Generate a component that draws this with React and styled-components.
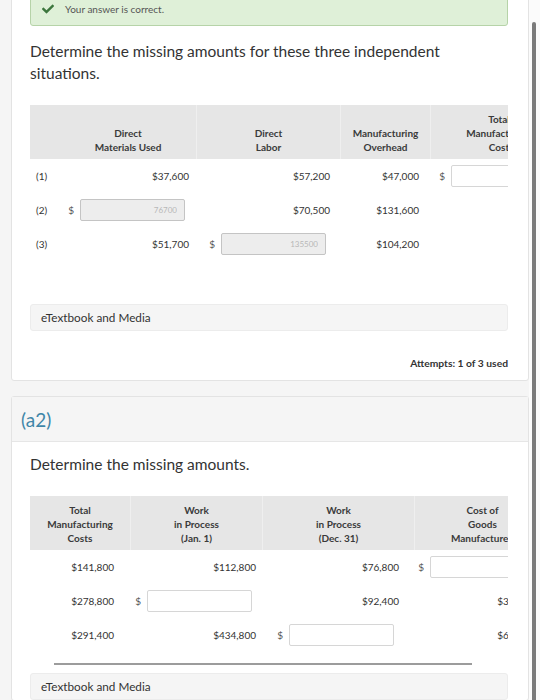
import React from "react";
import styled, { createGlobalStyle } from "styled-components";
import { FaCheck } from "react-icons/fa";

const GlobalStyle = createGlobalStyle`
  html, body {
    margin: 0;
    padding: 0;
  }
  body {
    background: #f5f5f5;
    font-family: Lato, "Noto Sans", sans-serif;
    color: #333;
    overflow: hidden;
  }
`;

const Page = styled.div`
  display: flex;
  width: 540px;
  height: 700px;
  overflow: hidden;
`;

const Main = styled.div`
  width: 518px;
  padding-left: 11px;
  flex-shrink: 0;
`;

const Rail = styled.div`
  width: 11px;
  background: #fbfbfb;
  padding: 22px 0 0 3px;
  box-sizing: border-box;
  display: flex;
  flex-direction: column;
`;

const Thumb = styled.div`
  flex: 1;
  width: 4px;
  background: #7b7b7b;
  border-radius: 2px 2px 0 0;
`;

const Card = styled.section`
  width: 518px;
  box-sizing: border-box;
  background: #fff;
  border: 1px solid #e3e3e3;
  border-radius: 3px;
  margin-top: ${(p) => p.$top}px;
`;

const CardHead = styled.div`
  height: 45px;
  box-sizing: border-box;
  background: #f5f5f5;
  border-bottom: 1px solid #e6e6e6;
  display: flex;
  align-items: center;
  padding-left: 9px;
  font-size: 19px;
  color: #3f86a8;
`;

const CardBody = styled.div`
  padding: ${(p) => p.$pt || 0}px 20px ${(p) => p.$pb || 0}px 18px;
`;

const Banner = styled.div`
  height: 36px;
  box-sizing: border-box;
  padding: 2px 0 0 11px;
  display: flex;
  align-items: center;
  gap: 11px;
  background: #dff0d8;
  border: 1px solid #b6d3a8;
  border-radius: 3px;
  font-size: 10px;
  color: #555;
`;

const Question = styled.p`
  margin: ${(p) => p.$top}px 0 0;
  font-size: 15.5px;
  line-height: 22px;
  color: #333;
`;

const TableWrap = styled.div`
  margin-top: 21px;
  width: 478px;
  overflow: hidden;
`;

const Grid = styled.div`
  display: grid;
  grid-template-columns: ${(p) => p.$cols};
  grid-template-rows: 54px;
  grid-auto-rows: 34px;
  width: max-content;
  font-size: 10px;
`;

const Head = styled.div`
  grid-column: span ${(p) => p.$span || 1};
  background: #e6e6e6;
  display: flex;
  flex-direction: column;
  justify-content: flex-end;
  align-items: center;
  text-align: center;
  padding: 0 ${(p) => p.$shift || 0}px 5px 0;
  font-weight: 700;
  line-height: 14px;
  color: #3a3a3a;
  border-left: ${(p) => (p.$sep ? "1px solid #efefef" : "none")};
`;

const Cell = styled.div`
  display: flex;
  align-items: center;
  justify-content: ${(p) => (p.$left ? "flex-start" : "flex-end")};
  padding-left: ${(p) => p.$padL || 0}px;
  padding-right: ${(p) => p.$pad || 0}px;
  color: ${(p) => (p.$soft ? "#555" : "#333")};
  white-space: nowrap;
`;

const Field = styled.input`
  width: 105px;
  height: 22px;
  box-sizing: border-box;
  margin: 0 0 0 3px;
  flex-shrink: 0;
  border: 1px solid ${(p) => (p.$done ? "#c4c4c4" : "#d6d6d6")};
  background: ${(p) => (p.$done ? "#ededed" : "#fff")};
  border-radius: 2px;
  padding: 0 7px 0 0;
  text-align: right;
  font-family: inherit;
  font-size: 8px;
  color: #b8b8b8;
  outline: none;
`;

const Media = styled.div`
  margin-top: ${(p) => p.$top}px;
  height: 27px;
  box-sizing: border-box;
  background: #f5f5f5;
  border: 1px solid #ececec;
  border-radius: 3px;
  padding-left: 10px;
  display: flex;
  align-items: center;
  font-size: 11.75px;
  color: #333;
`;

const Attempts = styled.div`
  margin-top: 25px;
  text-align: right;
  font-size: 10.3px;
  line-height: 14px;
  font-weight: 700;
  color: #333;
`;

const Rule = styled.div`
  margin: 11px 0 0 24px;
  width: 418px;
  height: 2px;
  background: #9c9c9c;
`;

// column kinds: l = label, d = dollar sign, v = value (with right padding)
const table1 = {
  cols: "30px 17px 119px 22px 122px 12px 78px 18px 130px",
  kinds: ["l", "d", "v", "d", "v", "d", "v", "d", "v"],
  pads: [0, 3, 7, 3, 10, 3, 11, 3, 0],
  heads: [
    { span: 1, lines: [] },
    { span: 2, lines: ["Direct", "Materials Used"] },
    { span: 2, sep: true, lines: ["Direct", "Labor"] },
    { span: 2, sep: true, lines: ["Manufacturing", "Overhead"] },
    { span: 2, sep: true, shift: 11, lines: ["Total", "Manufacturing", "Cost"] },
  ],
  rows: [
    ["(1)", "", "$37,600", "", "$57,200", "", "$47,000", "$", { value: "" }],
    ["(2)", "$", { value: "76700", done: true }, "", "$70,500", "", "$131,600", "", ""],
    ["(3)", "", "$51,700", "$", { value: "135500", done: true }, "", "$104,200", "", ""],
  ],
};

const table2 = {
  cols: "100px 14px 118px 24px 128px 13px 123px",
  kinds: ["v", "d", "v", "d", "v", "d", "v"],
  pads: [16, 3, 6, 3, 15, 3, 10],
  heads: [
    { span: 1, lines: ["Total", "Manufacturing", "Costs"] },
    { span: 2, sep: true, lines: ["Work", "in Process", "(Jan. 1)"] },
    { span: 2, sep: true, lines: ["Work", "in Process", "(Dec. 31)"] },
    { span: 2, sep: true, lines: ["Cost of", "Goods", "Manufactured"] },
  ],
  rows: [
    ["$141,800", "", "$112,800", "", "$76,800", "$", { value: "" }],
    ["$278,800", "$", { value: "" }, "", "$92,400", "", "$309,500"],
    ["$291,400", "", "$434,800", "$", { value: "" }, "", "$662,200"],
  ],
};

const AmountTable = ({ table }) => (
  <TableWrap>
    <Grid $cols={table.cols}>
      {table.heads.map((h, i) => (
        <Head key={i} $span={h.span} $sep={h.sep} $shift={h.shift}>
          {h.lines.map((line) => (
            <span key={line}>{line}</span>
          ))}
        </Head>
      ))}
      {table.rows.map((row, r) =>
        row.map((c, i) => {
          const kind = table.kinds[i];
          if (typeof c === "object") {
            return (
              <Cell key={`${r}-${i}`} $left>
                <Field readOnly value={c.value} $done={c.done} />
              </Cell>
            );
          }
          return (
            <Cell
              key={`${r}-${i}`}
              $left={kind === "l"}
              $padL={kind === "l" ? 6 : 0}
              $pad={table.pads[i]}
              $soft={kind === "d"}
            >
              {c}
            </Cell>
          );
        })
      )}
    </Grid>
  </TableWrap>
);

export default function App() {
  return (
    <>
      <GlobalStyle />
      <Page>
        <Main>
          <Card $top={-30}>
            <CardBody $pt={19} $pb={10}>
              <Banner>
                <FaCheck size={12} color="#3c763d" />
                <span>Your answer is correct.</span>
              </Banner>
              <Question $top={14}>
                Determine the missing amounts for these three independent situations.
              </Question>
              <AmountTable table={table1} />
              <Media $top={43}>eTextbook and Media</Media>
              <Attempts>Attempts: 1 of 3 used</Attempts>
            </CardBody>
          </Card>
          <Card $top={15}>
            <CardHead>(a2)</CardHead>
            <CardBody>
              <Question $top={11}>Determine the missing amounts.</Question>
              <AmountTable table={table2} />
              <Rule />
              <Media $top={8}>eTextbook and Media</Media>
            </CardBody>
          </Card>
        </Main>
        <Rail>
          <Thumb />
        </Rail>
      </Page>
    </>
  );
}
